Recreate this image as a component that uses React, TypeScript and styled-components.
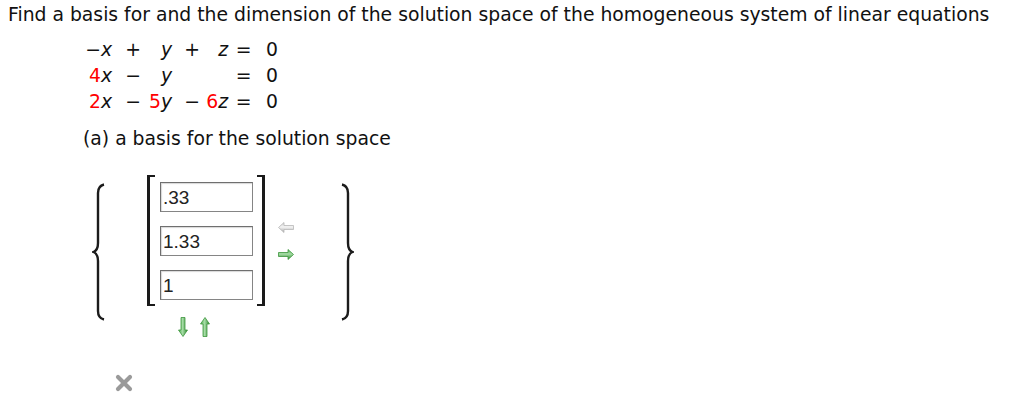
import styled, { createGlobalStyle } from "styled-components";

const GlobalStyle = createGlobalStyle`
  body {
    margin: 0;
    background: #fff;
    font-family: "DejaVu Sans", Verdana, sans-serif;
    color: #111;
  }
`;

const Page = styled.div`
  padding: 4px 8px 0 8px;
  width: 1024px;
  height: 407px;
  box-sizing: border-box;
  overflow: hidden;
  font-size: 18.8px;
`;

const Title = styled.div`
  line-height: 22px;
  white-space: nowrap;
`;

const Equations = styled.div`
  display: grid;
  grid-template-columns: 28px 42px 18px 38px 18px 29px 30px;
  grid-auto-rows: 26px;
  margin: 11px 0 0 76px;
  line-height: 26px;
`;

const Term = styled.span`
  display: flex;
  justify-content: flex-end;
  white-space: nowrap;
`;

const Op = styled.span<{ $shift?: number }>`
  display: flex;
  justify-content: center;
  padding-left: ${(p) => p.$shift ?? 0}px;
`;

const Rhs = styled.span`
  padding-left: 9px;
`;

const Coef = styled.span`
  color: #f00;
`;

const Var = styled.i`
  font-style: italic;
`;

const Label = styled.div`
  margin: 13px 0 0 75px;
  line-height: 22px;
`;

const Basis = styled.div`
  display: flex;
  align-items: flex-start;
  margin: 25px 0 0 84px;
`;

const Brace = styled.svg`
  display: block;
  margin-top: 8px;
`;

const VectorColumn = styled.div`
  display: flex;
  flex-direction: column;
  margin-left: 41px;
`;

const Matrix = styled.div`
  display: flex;
  align-items: stretch;
`;

const Bracket = styled.div<{ $side: "left" | "right" }>`
  width: 5px;
  border: 2px solid #1a1a1a;
  border-left-width: ${(p) => (p.$side === "left" ? "3px" : "0")};
  border-right-width: ${(p) => (p.$side === "right" ? "3px" : "0")};
`;

const Entries = styled.div`
  display: flex;
  flex-direction: column;
  gap: 14px;
  padding: 7px 4px 6px 5px;
`;

const Entry = styled.input`
  box-sizing: border-box;
  width: 93px;
  height: 30px;
  margin: 0;
  padding: 2px 2px 0 2px;
  border: 1px solid #858585;
  border-top-color: #6f6f6f;
  border-left-color: #6f6f6f;
  box-shadow: inset 1px 1px 1px #d8d8d8;
  font-family: "Liberation Sans", Arial, sans-serif;
  font-size: 19px;
  color: #222;
  background: #fff;
  outline: none;
`;

const RowArrows = styled.div`
  display: flex;
  gap: 12px;
  margin: 11px 0 0 31px;
`;

const SideArrows = styled.div`
  display: flex;
  flex-direction: column;
  gap: 16px;
  margin: 47px 0 0 13px;
`;

const RightBrace = styled(Brace)`
  margin-left: 46px;
`;

const Remove = styled.svg`
  display: block;
  margin: 37px 0 0 107px;
`;

type Dir = "left" | "right" | "up" | "down";

function Arrow({ dir, tone }: { dir: Dir; tone: "green" | "gray" }) {
  const id = `g-${dir}-${tone}`;
  const light = tone === "green" ? "#a6dca6" : "#f4f4f4";
  const mid = tone === "green" ? "#52b352" : "#cdcdcd";
  const dark = tone === "green" ? "#2e8a2e" : "#a8a8a8";
  const edge = tone === "green" ? "#3c963c" : "#b8b8b8";
  const horizontal = dir === "left" || dir === "right";
  const paths: Record<Dir, string> = {
    right: "M0.5 3.5 H10 V0.5 L15.5 5.5 L10 10.5 V7.5 H0.5 Z",
    left: "M15.5 3.5 H6 V0.5 L0.5 5.5 L6 10.5 V7.5 H15.5 Z",
    down: "M3 0.5 H7 V13 H9.5 L5 19.5 L0.5 13 H3 Z",
    up: "M3 19.5 H7 V7 H9.5 L5 0.5 L0.5 7 H3 Z",
  };
  return (
    <svg
      width={horizontal ? 16 : 10}
      height={horizontal ? 11 : 20}
      viewBox={horizontal ? "0 0 16 11" : "0 0 10 20"}
    >
      <defs>
        <linearGradient
          id={id}
          x1="0"
          y1="0"
          x2={horizontal ? "0" : "1"}
          y2={horizontal ? "1" : "0"}
        >
          <stop offset="0" stopColor={mid} />
          <stop offset="0.45" stopColor={light} />
          <stop offset="1" stopColor={dark} />
        </linearGradient>
      </defs>
      <path d={paths[dir]} fill={`url(#${id})`} stroke={edge} strokeWidth={0.8} />
    </svg>
  );
}

function CurlyBrace({ side }: { side: "left" | "right" }) {
  const d =
    side === "left"
      ? "M12 1.5 C7.5 2.5 6 5 6 10 V60 C6 66 4 68 1.5 69 C4 70 6 72 6 78 V128 C6 133 7.5 135.5 12 136.5"
      : "M2 1.5 C6.5 2.5 8 5 8 10 V60 C8 66 10 68 12.5 69 C10 70 8 72 8 78 V128 C8 133 6.5 135.5 2 136.5";
  const Comp = side === "left" ? Brace : RightBrace;
  return (
    <Comp width={14} height={138} viewBox="0 0 14 138">
      <path d={d} fill="none" stroke="#1c1c1c" strokeWidth={2.4} />
    </Comp>
  );
}

export default function App() {
  return (
    <>
      <GlobalStyle />
      <Page>
        <Title>
          Find a basis for and the dimension of the solution space of the
          homogeneous system of linear equations
        </Title>
        <Equations>
          <Term>
            −<Var>x</Var>
          </Term>
          <Op>+</Op>
          <Term>
            <Var>y</Var>
          </Term>
          <Op $shift={2}>+</Op>
          <Term>
            <Var>z</Var>
          </Term>
          <Op $shift={2}>=</Op>
          <Rhs>0</Rhs>

          <Term>
            <Coef>4</Coef>
            <Var>x</Var>
          </Term>
          <Op>−</Op>
          <Term>
            <Var>y</Var>
          </Term>
          <Op />
          <Term />
          <Op $shift={2}>=</Op>
          <Rhs>0</Rhs>

          <Term>
            <Coef>2</Coef>
            <Var>x</Var>
          </Term>
          <Op>−</Op>
          <Term>
            <Coef>5</Coef>
            <Var>y</Var>
          </Term>
          <Op $shift={2}>−</Op>
          <Term>
            <Coef>6</Coef>
            <Var>z</Var>
          </Term>
          <Op $shift={2}>=</Op>
          <Rhs>0</Rhs>
        </Equations>
        <Label>(a) a basis for the solution space</Label>
        <Basis>
          <CurlyBrace side="left" />
          <VectorColumn>
            <Matrix>
              <Bracket $side="left" />
              <Entries>
                <Entry defaultValue=".33" />
                <Entry defaultValue="1.33" />
                <Entry defaultValue="1" />
              </Entries>
              <Bracket $side="right" />
            </Matrix>
            <RowArrows>
              <Arrow dir="down" tone="green" />
              <Arrow dir="up" tone="green" />
            </RowArrows>
          </VectorColumn>
          <SideArrows>
            <Arrow dir="left" tone="gray" />
            <Arrow dir="right" tone="green" />
          </SideArrows>
          <CurlyBrace side="right" />
        </Basis>
        <Remove width={18} height={18} viewBox="0 0 18 18">
          <path
            d="M3 3 L15 15 M15 3 L3 15"
            stroke="#9a9a9a"
            strokeWidth={4.2}
            strokeLinecap="round"
          />
        </Remove>
      </Page>
    </>
  );
}
